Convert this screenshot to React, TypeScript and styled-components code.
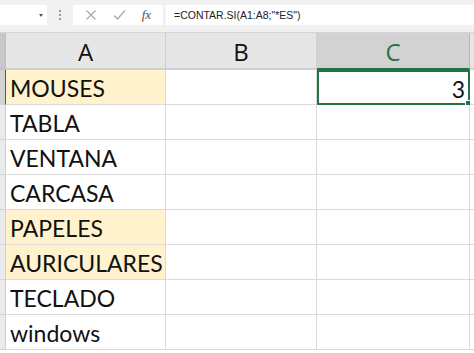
import React from "react";
import styled, { createGlobalStyle } from "styled-components";

const green = "#217346";
const grid = "#dadada";

const Global = createGlobalStyle`
  html, body { margin: 0; padding: 0; background: #fff; }
  body { width: 474px; height: 353px; overflow: hidden; font-family: "Lato", "Liberation Sans", sans-serif; }
`;

const Sheet = styled.div`
  width: 474px;
  height: 353px;
  overflow: hidden;
  background: #fff;
`;

const Toolbar = styled.div`
  display: flex;
  align-items: flex-start;
  height: 33px;
  box-sizing: border-box;
  padding-top: 5px;
  background: #f1f1f1;
  border-bottom: 1px solid #d6d6d6;
`;

const NameBox = styled.div`
  width: 47px;
  height: 20px;
  background: #fff;
  display: flex;
  align-items: center;
  justify-content: flex-end;
  padding-right: 4px;
  box-sizing: border-box;
`;

const Caret = styled.span`
  width: 0;
  height: 0;
  border-left: 2.5px solid transparent;
  border-right: 2.5px solid transparent;
  border-top: 3px solid #555;
`;

const Grip = styled.div`
  width: 26px;
  height: 20px;
  display: flex;
  flex-direction: column;
  align-items: center;
  justify-content: center;
  gap: 2px;
`;

const Dot = styled.span`
  width: 2px;
  height: 2px;
  background: #9a9a9a;
`;

const Buttons = styled.div`
  width: 90px;
  height: 20px;
  background: #fff;
  display: flex;
  align-items: center;
  justify-content: space-around;
  padding: 0 4px;
  box-sizing: border-box;
  margin-right: 3px;
`;

const Fx = styled.span`
  font-family: "Liberation Serif", serif;
  font-style: italic;
  font-size: 13px;
  color: #555;
`;

const Formula = styled.div`
  flex: 1;
  height: 20px;
  background: #fff;
  font-family: "Liberation Sans", sans-serif;
  font-size: 10.5px;
  line-height: 20px;
  color: #222;
  padding-left: 8px;
  white-space: nowrap;
`;

const Grid = styled.div`
  display: grid;
  grid-template-columns: 6px 160px 151px 153px 1fr;
  grid-template-rows: 37px repeat(8, 35px);
`;

const Corner = styled.div`
  background: #c8c8c8;
  border-right: 1px solid #bdbdbd;
  border-bottom: 1px solid #bdbdbd;
`;

const ColHead = styled.div<{ $active?: boolean }>`
  background: ${p => (p.$active ? "#d2d2d2" : "#e6e6e6")};
  color: ${p => (p.$active ? green : "#111")};
  border-right: 1px solid ${p => (p.$active ? "#b8b8b8" : "#cfcfcf")};
  border-bottom: 2px solid ${p => (p.$active ? green : "#cfcfcf")};
  box-sizing: border-box;
  display: flex;
  align-items: center;
  justify-content: center;
  font-family: "Open Sans", "Liberation Sans", sans-serif;
  font-size: 24px;
  padding-top: 2px;
`;

const RowHead = styled.div<{ $active?: boolean }>`
  background: ${p => (p.$active ? "#d2d2d2" : "#eaeaea")};
  border-right: 1px solid ${p => (p.$active ? green : "#cfcfcf")};
  border-bottom: 1px solid #d4d4d4;
  box-sizing: border-box;
`;

const Cell = styled.div<{ $fill?: boolean; $num?: boolean }>`
  position: relative;
  background: ${p => (p.$fill ? "#fff2cc" : "#fff")};
  border-right: 1px solid ${grid};
  border-bottom: 1px solid ${grid};
  box-sizing: border-box;
  display: flex;
  align-items: center;
  justify-content: ${p => (p.$num ? "flex-end" : "flex-start")};
  padding: 2px 6px 0 4px;
  font-size: 23px;
  color: #111;
  white-space: nowrap;
`;

const Selected = styled(Cell)`
  border: 2px solid ${green};
  padding-right: 3px;
`;

const Handle = styled.span`
  position: absolute;
  right: -4px;
  bottom: -4px;
  width: 5px;
  height: 5px;
  background: ${green};
  border: 1px solid #fff;
`;

const items = ["MOUSES", "TABLA", "VENTANA", "CARCASA", "PAPELES", "AURICULARES", "TECLADO", "windows"];
const filled = (s: string) => /ES$/.test(s);

export default function App() {
  return (
    <Sheet>
      <Global />
      <Toolbar>
        <NameBox><Caret /></NameBox>
        <Grip><Dot /><Dot /><Dot /></Grip>
        <Buttons>
          <svg width="12" height="12" viewBox="0 0 12 12">
            <path d="M1.5 1.5l9 9M10.5 1.5l-9 9" stroke="#a8a8a8" strokeWidth="1.2" fill="none" />
          </svg>
          <svg width="13" height="12" viewBox="0 0 13 12">
            <path d="M1 6.5l3.5 3.5L12 1.5" stroke="#a8a8a8" strokeWidth="1.2" fill="none" />
          </svg>
          <Fx>fx</Fx>
        </Buttons>
        <Formula>=CONTAR.SI(A1:A8;"*ES")</Formula>
      </Toolbar>
      <Grid>
        <Corner />
        <ColHead>A</ColHead>
        <ColHead>B</ColHead>
        <ColHead $active>C</ColHead>
        <ColHead />
        {items.map((text, i) => (
          <React.Fragment key={i}>
            <RowHead $active={i === 0} />
            <Cell $fill={filled(text)}>{text}</Cell>
            <Cell />
            {i === 0 ? (
              <Selected $num>3<Handle /></Selected>
            ) : (
              <Cell />
            )}
            <Cell />
          </React.Fragment>
        ))}
      </Grid>
    </Sheet>
  );
}
